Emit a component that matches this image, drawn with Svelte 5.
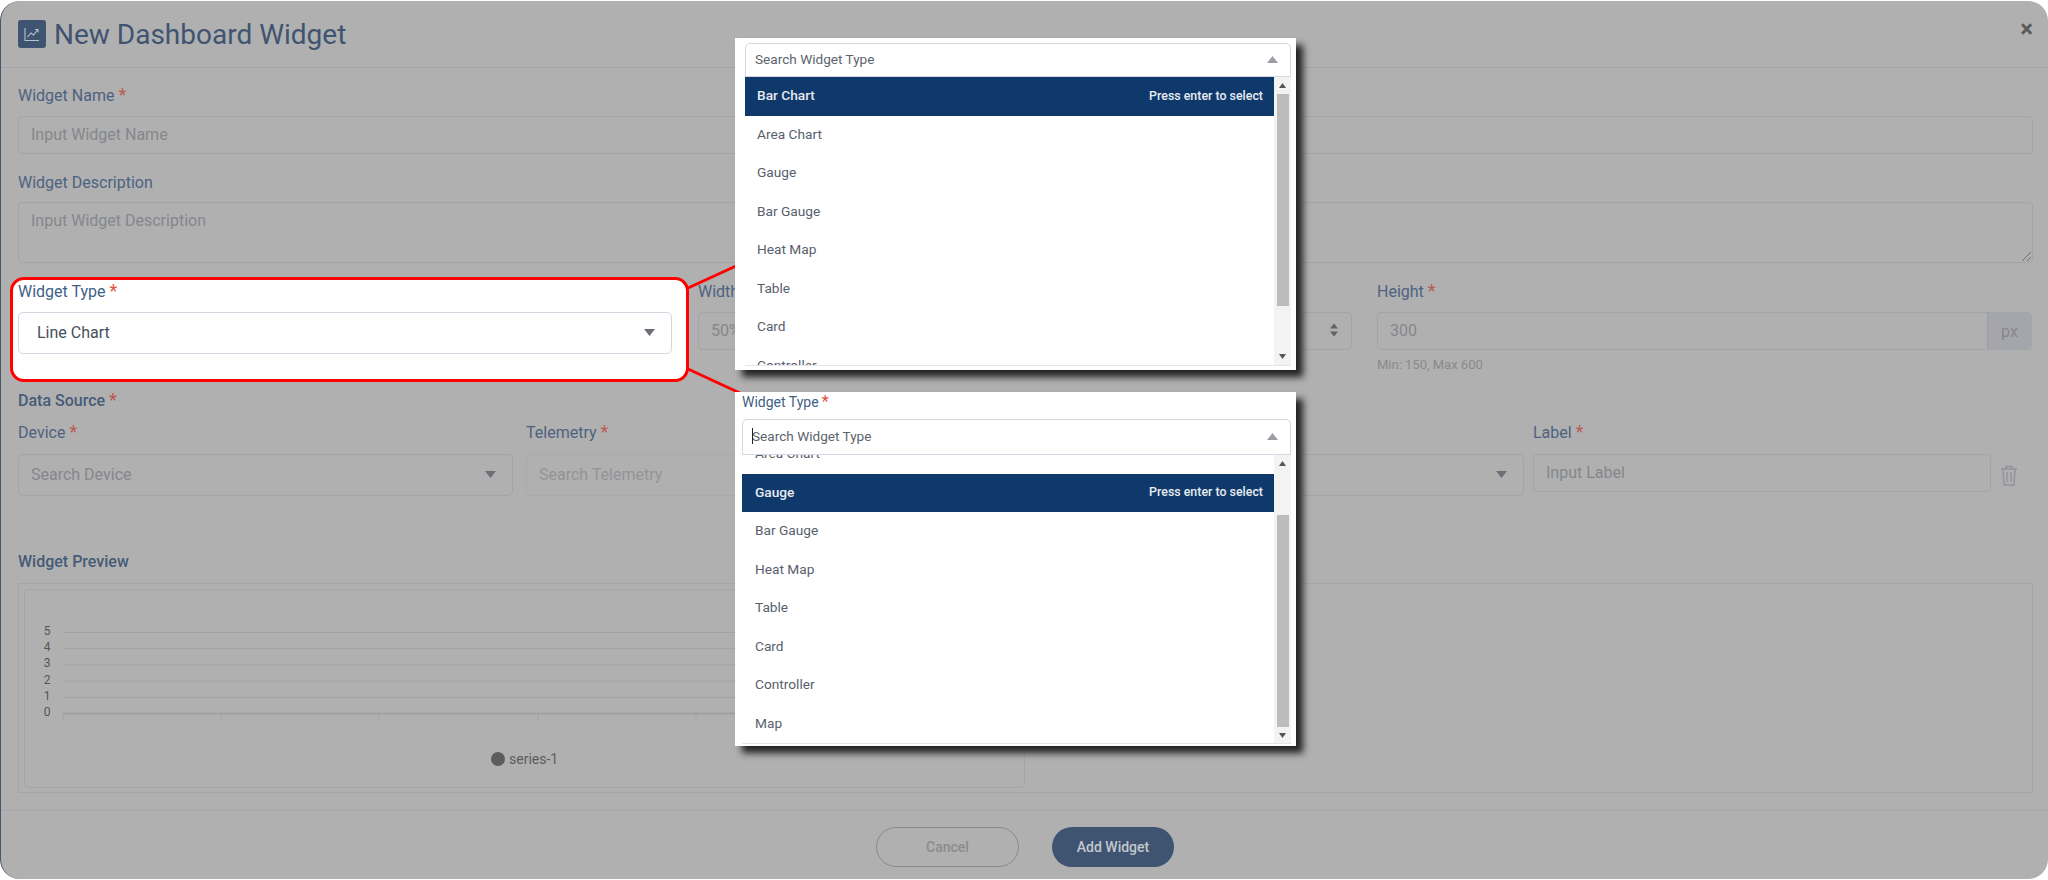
<script>
  const firstList = ['Bar Chart', 'Area Chart', 'Gauge', 'Bar Gauge', 'Heat Map', 'Table', 'Card', 'Controller'];
  const secondList = ['Area Chart', 'Gauge', 'Bar Gauge', 'Heat Map', 'Table', 'Card', 'Controller', 'Map'];
  const yLabels = [5, 4, 3, 2, 1, 0];
  const ticks = [0, 158, 316, 475, 633, 791, 949];
</script>

{#snippet caret(up = false)}
  <svg class="caret" class:up viewBox="0 0 11 7" width="11" height="7"><path d="M0 0h11L5.5 7z" /></svg>
{/snippet}

{#snippet req(text)}
  <span class="label">{text}<span class="star">*</span></span>
{/snippet}

{#snippet dropdown(items, active)}
  <div class="results">
    <ul>
      {#each items as item}
        <li class:active={item === active}>
          <span>{item}</span>
          {#if item === active}<span class="hint">Press enter to select</span>{/if}
        </li>
      {/each}
    </ul>
    <div class="scrollbar">
      <svg class="arrow" viewBox="0 0 17 17"><path d="M5 11h7L8.5 6z" /></svg>
      <div class="track"><div class="thumb"></div></div>
      <svg class="arrow" viewBox="0 0 17 17"><path d="M5 6h7l-3.5 5z" /></svg>
    </div>
  </div>
{/snippet}

<div class="modal">
  <header>
    <span class="title-icon">
      <svg viewBox="0 0 28 28" width="28" height="28" fill="none" stroke="#b9c2cf" stroke-width="1.1">
        <path d="M7 8v12.5h14" />
        <path d="M9.5 17l3.5-4 2.5 2 4-5M17 9.5h3v3" />
      </svg>
    </span>
    <h1>New Dashboard Widget</h1>
    <span class="close">×</span>
  </header>

  <div class="body">
    <div class="field">
      {@render req('Widget Name')}
      <div class="input">Input Widget Name</div>
    </div>

    <div class="field desc-field">
      <span class="label">Widget Description</span>
      <div class="input area">
        Input Widget Description
        <svg class="grip" viewBox="0 0 10 10" width="10" height="10"><path d="M1 10l9-9M6 10l4-4" /></svg>
      </div>
    </div>

    <div class="size-row">
      <div class="field type-field">
        {@render req('Widget Type')}
        <div class="input select live">Line Chart {@render caret()}</div>
      </div>
      <div class="field width-field">
        {@render req('Width')}
        <div class="input select short">
          50%
          <svg viewBox="0 0 10 16" width="10" height="16"><path class="fill" d="M1 6.5h8L5 1.5zM1 9.5h8l-4 5z" /></svg>
        </div>
      </div>
      <div class="field height-field">
        {@render req('Height')}
        <div class="input short group">
          <span class="value">300</span>
          <span class="addon">px</span>
        </div>
        <small>Min: 150, Max 600</small>
      </div>
    </div>

    <h2 class="section">Data Source<span class="star">*</span></h2>
    <div class="source-row">
      <div class="field">
        {@render req('Device')}
        <div class="input select tall">Search Device {@render caret()}</div>
      </div>
      <div class="field">
        {@render req('Telemetry')}
        <div class="input select tall off">Search Telemetry {@render caret()}</div>
      </div>
      <div class="field">
        {@render req('Aggregation')}
        <div class="input select tall">Search Aggregation {@render caret()}</div>
      </div>
      <div class="field">
        {@render req('Label')}
        <div class="input">Input Label</div>
      </div>
      <svg class="trash" viewBox="0 0 18 21" width="18" height="21" fill="none" stroke="#8f9299" stroke-width="1.3">
        <path d="M1 4h16M6 4V1.5h6V4M3 4l1 16h10l1-16M7 7v10M11 7v10" />
      </svg>
    </div>

    <h2 class="section preview-title">Widget Preview</h2>
    <div class="preview">
      <div class="chart-card">
        <svg class="chart" viewBox="0 0 1001 199" width="1001" height="199">
          {#each yLabels as n, i}
            <text x="22" y={45 + i * 16.2} text-anchor="middle">{n}</text>
            <line x1="38" x2="1000" y1={42.5 + i * 16.2} y2={42.5 + i * 16.2} class:axis={n === 0} />
          {/each}
          {#each ticks as t}
            <line x1={38 + t} x2={38 + t} y1="124" y2="130" />
          {/each}
          <circle cx="473" cy="169" r="7" fill="#5c5c5c" />
          <text class="legend" x="484" y="174">series-1</text>
        </svg>
      </div>
    </div>
  </div>

  <footer>
    <button class="cancel">Cancel</button>
    <button class="add">Add Widget</button>
  </footer>
</div>

<!-- callout lines from the highlighted field to the two popups -->
<svg class="connector" width="2048" height="880">
  <path d="M688 288L736 266M688 369L742 394" />
</svg>

<div class="popup first">
  <div class="combo">Search Widget Type {@render caret(true)}</div>
  {@render dropdown(firstList, 'Bar Chart')}
</div>

<div class="popup second">
  <span class="label">Widget Type<span class="star">*</span></span>
  <div class="combo"><i class="cursor"></i>Search Widget Type {@render caret(true)}</div>
  {@render dropdown(secondList, 'Gauge')}
</div>

<style>
  :global(body) {
    margin: 0;
    background: #fff;
  }

  .modal {
    box-sizing: border-box;
    width: 2048px;
    height: 878px;
    margin-top: 1px;
    display: flex;
    flex-direction: column;
    background: #b0b0b0;
    border-left: 1px solid #46566b;
    border-radius: 20px;
    font-family: Roboto, sans-serif;
    overflow: hidden;
  }

  header {
    height: 66px;
    flex: none;
    display: flex;
    align-items: center;
    padding-left: 17px;
    border-bottom: 1px solid #a6a6a8;
  }
  .title-icon {
    width: 28px;
    height: 28px;
    margin-right: 8px;
    border-radius: 3px;
    background: #3f5470;
  }
  h1 {
    margin: 0;
    font-size: 28px;
    font-weight: 400;
    color: #3f5470;
  }
  .close {
    margin-left: auto;
    margin-right: 15px;
    margin-bottom: 10px;
    font-size: 24px;
    font-weight: 700;
    color: #5a5a5a;
  }

  .body {
    flex: 1;
    padding: 18px 15px 0 17px;
  }

  .field {
    display: flex;
    flex-direction: column;
    margin-bottom: 19px;
  }
  .label {
    height: 20px;
    margin-bottom: 10px;
    font-size: 16px;
    line-height: 20px;
    color: #4e6280;
  }
  .desc-field .label {
    margin-bottom: 9px;
  }
  .star {
    margin-left: 4px;
    font-size: 18px;
    line-height: 16px;
    color: #b85c55;
  }
  .type-field .star,
  .popup .star {
    color: #e2543f;
  }

  .input {
    box-sizing: border-box;
    height: 38px;
    padding: 0 12px 2px;
    display: flex;
    align-items: center;
    border: 1px solid #a2a4ad;
    border-radius: 4px;
    font-size: 16px;
    color: #85878c;
  }
  .area {
    position: relative;
    height: 61px;
    padding-top: 8px;
    align-items: flex-start;
  }
  .grip {
    position: absolute;
    right: 1px;
    bottom: 1px;
    fill: none;
    stroke: #6e6e6e;
  }

  .select {
    justify-content: space-between;
    height: 42px;
    border-radius: 5px;
  }
  .short {
    height: 38px;
  }
  .tall {
    height: 42px;
  }
  .off {
    border-color: #a9aab0;
    color: #929497;
  }
  .caret {
    flex: none;
    margin-right: 4px;
    fill: #6c6f75;
  }
  .caret.up {
    margin-right: 8px;
    fill: #9a9da3;
    transform: rotate(180deg);
  }
  .fill {
    fill: #5f6268;
  }

  .size-row {
    display: grid;
    grid-template-columns: 655px 654px 655px;
    column-gap: 25px;
    height: 109px;
  }

  /* white cut-out with the red outline around the field being explained */
  .type-field {
    position: relative;
    isolation: isolate;
    margin-right: 1px;
  }
  .type-field::before {
    content: '';
    position: absolute;
    z-index: -1;
    inset: -5px -17px auto -8px;
    height: 99px;
    background: #fff;
    border: 3px solid #f00;
    border-radius: 14px;
  }
  .type-field .label {
    color: #3f5f88;
  }
  .live {
    border-color: #d3d6e0;
    padding-left: 18px;
    color: #47505c;
  }

  .group {
    padding: 0;
    overflow: hidden;
  }
  .value {
    flex: 1;
    padding: 0 0 2px 12px;
  }
  .addon {
    width: 43px;
    height: 100%;
    display: flex;
    align-items: center;
    justify-content: center;
    background: #a5a6ab;
    border-left: 1px solid #9c9da4;
    font-size: 16px;
  }
  small {
    margin-top: 7px;
    font-size: 13px;
    color: #8a8a8a;
  }

  .section {
    margin: 0;
    height: 20px;
    font-size: 16px;
    font-weight: 500;
    line-height: 20px;
    color: #465b77;
  }

  .source-row {
    display: grid;
    grid-template-columns: 499px 495px 494px 458px 1fr;
    column-gap: 9px;
    margin-top: 12px;
    height: 129px;
  }
  .source-row .label {
    margin-bottom: 11px;
  }
  .source-row .field:nth-child(1) {
    margin-right: 4px;
  }
  .trash {
    margin-top: 42px;
  }

  .preview-title {
    margin-bottom: 11px;
  }
  .preview {
    box-sizing: border-box;
    height: 210px;
    padding: 5px 0 0 5px;
    border: 1px solid #a6a6a8;
  }
  .chart-card {
    width: 1001px;
    height: 199px;
    border: 1px solid #a6a6a8;
    border-radius: 4px;
    box-sizing: border-box;
  }
  .chart {
    display: block;
  }
  .chart line {
    stroke: #a2a2a2;
    stroke-width: 1;
  }
  .chart line.axis {
    stroke: #a0a0a0;
    stroke-width: 2;
  }
  .chart text {
    font-size: 12px;
    fill: #555;
    font-family: Roboto, sans-serif;
  }
  .chart .legend {
    font-size: 14px;
    fill: #5c5c5c;
  }

  footer {
    height: 69px;
    flex: none;
    display: flex;
    justify-content: center;
    gap: 33px;
    padding-top: 16px;
    padding-left: 1px;
    box-sizing: border-box;
    border-top: 1px solid #a6a6a8;
  }
  button {
    height: 40px;
    border-radius: 20px;
    font-family: Roboto, sans-serif;
    font-size: 14px;
    font-weight: 500;
  }
  .cancel {
    width: 143px;
    background: transparent;
    border: 1px solid #8a8a8a;
    color: #8c8c8c;
  }
  .add {
    width: 122px;
    background: #3f5470;
    border: 0;
    color: #c4c8ce;
  }

  .connector {
    position: absolute;
    left: 0;
    top: 0;
    fill: none;
    stroke: #f00;
    stroke-width: 3;
  }

  .popup {
    position: absolute;
    left: 735px;
    width: 561px;
    box-sizing: border-box;
    background: #fff;
    box-shadow: 7px 7px 7px #222;
    font-family: Roboto, sans-serif;
  }
  .popup.first {
    top: 38px;
    height: 332px;
    padding: 5px 5px 0 10px;
  }
  .popup.second {
    top: 392px;
    height: 354px;
    padding: 0 5px 0 7px;
  }
  .popup .label {
    display: block;
    height: 20px;
    margin: 0 0 7px;
    font-size: 14px;
    line-height: 20px;
    color: #3f5f88;
  }
  .popup .star {
    margin-left: 3px;
    font-size: 17px;
  }

  .combo {
    box-sizing: border-box;
    height: 34px;
    padding: 0 4px 2px 9px;
    display: flex;
    align-items: center;
    justify-content: space-between;
    border: 1px solid #d3d8e2;
    border-radius: 5px 5px 0 0;
    font-size: 13.6px;
    color: #5c636d;
  }
  .second .combo {
    height: 36px;
  }
  .cursor {
    position: absolute;
    left: 17px;
    width: 1px;
    height: 16px;
    background: #222;
  }

  .results {
    display: flex;
    height: 288px;
    overflow: hidden;
    border-bottom: 1px solid #e3e5ea;
  }
  ul {
    flex: 1;
    margin: 0;
    padding: 0;
    list-style: none;
  }
  .second ul {
    margin-top: -20px;
  }
  li {
    box-sizing: border-box;
    height: 38.5px;
    padding: 0 11px 2px 12px;
    display: flex;
    align-items: center;
    justify-content: space-between;
    font-size: 13.7px;
    color: #57606c;
  }
  .second li {
    padding-left: 13px;
  }
  li.active {
    background: #10396b;
    color: #e6ebf2;
    font-weight: 500;
  }
  .hint {
    font-size: 12.4px;
    font-weight: 500;
  }
  .scrollbar {
    flex: none;
    width: 17px;
    display: flex;
    flex-direction: column;
    background: #f3f3f4;
  }
  .arrow {
    flex: none;
    height: 17px;
    fill: #555;
  }
  .track {
    flex: 1;
    padding: 0 2px 0 3px;
  }
  .thumb {
    height: 212px;
    background: #bcbcbc;
  }
  .second .thumb {
    margin-top: 43px;
  }
</style>
